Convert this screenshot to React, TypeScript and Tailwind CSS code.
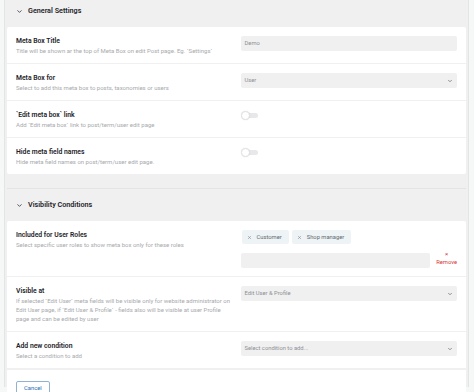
import { ChevronDown, X } from "lucide-react";

const font = { fontFamily: "Roboto, 'Liberation Sans', sans-serif" };

const Label = ({ title, desc }: { title: string; desc: string }) => (
  <div>
    <div className="text-[6.8px] leading-[10px] font-semibold text-[#1d2327]">{title}</div>
    <div className="text-[6px] leading-[9px] text-[#a7aaad]">{desc}</div>
  </div>
);

const Select = ({ value }: { value: string }) => (
  <div className="h-[15px] bg-[#f0f0f1] rounded-[2px] flex items-center justify-between pl-[4px] pr-[4px]">
    <span className="text-[5.8px] text-[#8c8f94]">{value}</span>
    <ChevronDown className="w-[6px] h-[6px] text-[#50575e]" strokeWidth={2.5} />
  </div>
);

const Toggle = () => (
  <div className="relative w-[18px] h-[9px] mt-[1px]">
    <div className="absolute left-[3px] top-[2px] w-[14px] h-[5px] rounded-full bg-[#e8e8ea]" />
    <div className="absolute left-0 top-0 w-[9px] h-[9px] rounded-full bg-white border border-[#e3e3e5] shadow-[0_0_1px_rgba(0,0,0,0.15)]" />
  </div>
);

const Row = ({ children, last }: { children: React.ReactNode; last?: boolean }) => (
  <div className={`grid grid-cols-2 gap-[8px] px-[9px] pt-[9px] pb-[8px] ${last ? "" : "border-b border-[#f0f0f1]"}`}>
    {children}
  </div>
);

const Header = ({ title }: { title: string }) => (
  <div className="h-[32px] flex items-center gap-[5px] pl-[9px]">
    <ChevronDown className="w-[7px] h-[7px] text-[#1d2327]" strokeWidth={2.5} />
    <span className="text-[7.2px] font-semibold text-[#1d2327]">{title}</span>
  </div>
);

const Tag = ({ text }: { text: string }) => (
  <div className="h-[14px] bg-[#eef4f5] rounded-[2px] flex items-center gap-[5px] pl-[5px] pr-[7px]">
    <X className="w-[5px] h-[5px] text-[#646970]" strokeWidth={2} />
    <span className="text-[5.8px] text-[#646970]">{text}</span>
  </div>
);

export default function App() {
  return (
    <div style={font} className="w-[474px] h-[392px] overflow-hidden bg-[#f6f7f7]">
      <div className="ml-[4px] mr-[5px] h-full bg-[#f0f0f1] border-x border-[#e2e4e7] -mt-[5px] pl-[2px] pr-[2px]">
        {/* GENERAL SETTINGS */}
        <div className="border-b border-[#e2e4e7] pb-[14px]">
          <Header title="General Settings" />
          <div className="bg-white rounded-[2px]">
            <Row>
              <Label title="Meta Box Title" desc="Title will be shown ar the top of Meta Box on edit Post page. Eg. `Settings`" />
              <div className="h-[15px] bg-[#f0f0f1] rounded-[2px] flex items-center pl-[4px]">
                <span className="text-[5.8px] text-[#8c8f94]">Demo</span>
              </div>
            </Row>
            <Row>
              <Label title="Meta Box for" desc="Select to add this meta box to posts, taxonomies or users" />
              <Select value="User" />
            </Row>
            <Row>
              <Label title="`Edit meta box` link" desc="Add `Edit meta box` link to post/term/user edit page" />
              <Toggle />
            </Row>
            <Row last>
              <Label title="Hide meta field names" desc="Hide meta field names on post/term/user edit page." />
              <Toggle />
            </Row>
          </div>
        </div>

        {/* VISIBILITY CONDITIONS */}
        <div>
          <Header title="Visibility Conditions" />
          <div className="bg-white rounded-[2px] h-[200px]">
            <div className="grid grid-cols-2 gap-[8px] px-[9px] pt-[9px] pb-[8px] border-b border-[#f0f0f1]">
              <Label title="Included for User Roles" desc="Select specific user roles to show meta box only for these roles" />
              <div>
                <div className="flex gap-[3px] pl-[1px]">
                  <Tag text="Customer" />
                  <Tag text="Shop manager" />
                </div>
                <div className="flex items-center gap-[6px] mt-[9px]">
                  <div className="flex-1 h-[15px] bg-[#f0f0f1] rounded-[2px]" />
                  <div className="flex flex-col items-center text-[#d63638] -mt-[6px]">
                    <span className="text-[6px] leading-[8px]">×</span>
                    <span className="text-[5.8px] leading-[8px]">Remove</span>
                  </div>
                </div>
              </div>
            </div>
            <Row>
              <Label
                title="Visible at"
                desc="If selected `Edit User` meta fields will be visible only for website administrator on Edit User page, if `Edit User & Profile` - fields also will be visible at user Profile page and can be edited by user"
              />
              <Select value="Edit User & Profile" />
            </Row>
            <Row>
              <Label title="Add new condition" desc="Select a condition to add" />
              <Select value="Select condition to add..." />
            </Row>
            <div className="border-t border-[#f0f0f1] px-[9px] pt-[3px]">
              <button className="h-[15px] px-[7px] border border-[#8fb3d1] rounded-[2px] text-[5.8px] leading-[8px] text-[#2271b1] bg-white">
                Cancel
              </button>
            </div>
          </div>
        </div>
      </div>
    </div>
  );
}
